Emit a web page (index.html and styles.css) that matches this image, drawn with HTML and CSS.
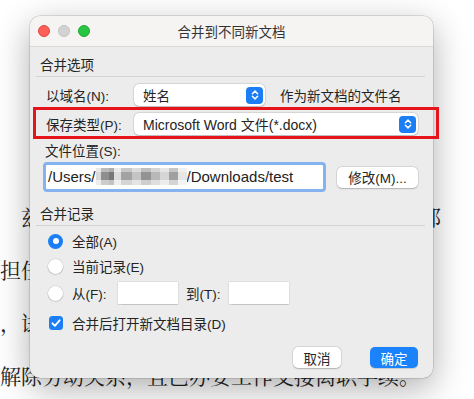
FILE: index.html
```html
<!DOCTYPE html>
<html lang="zh-CN">
<head>
<meta charset="utf-8">
<title>合并到不同新文档</title>
<link rel="stylesheet" href="styles.css">
</head>
<body>
<div class="doc">
  <p class="line">　兹证明我公司员工自入职以来在本公司财务部</p>
  <p class="line">担任会计一职，工作认真负责，能够独</p>
  <p class="line">，试用期满后转为正式员工，表现良好成</p>
  <p class="line">解除劳动关系，且已办妥工作交接离职手续。</p>
</div>

<div class="dialog">
  <div class="titlebar">
    <div class="lights">
      <span class="light red"></span>
      <span class="light gray"></span>
      <span class="light green"></span>
    </div>
    <div class="title">合并到不同新文档</div>
  </div>
  <div class="content">
    <div class="section-head">合并选项</div>

    <div class="row row-first">
      <span class="label">以域名(N):</span>
      <div class="popup popup-short">
        <span class="popup-text">姓名</span>
        <span class="stepper"><svg viewBox="0 0 16 16" width="14" height="14"><path d="M5 6.5 8 3.6 11 6.5M5 9.5 8 12.4 11 9.5" fill="none" stroke="#fff" stroke-width="1.7" stroke-linecap="round" stroke-linejoin="round"/></svg></span>
      </div>
      <span class="hint">作为新文档的文件名</span>
    </div>

    <div class="row row-second">
      <span class="label">保存类型(P):</span>
      <div class="popup popup-long">
        <span class="popup-text popup-text-long">Microsoft Word 文件(*.docx)</span>
        <span class="stepper"><svg viewBox="0 0 16 16" width="14" height="14"><path d="M5 6.5 8 3.6 11 6.5M5 9.5 8 12.4 11 9.5" fill="none" stroke="#fff" stroke-width="1.7" stroke-linecap="round" stroke-linejoin="round"/></svg></span>
      </div>
    </div>

    <div class="label loc-label">文件位置(S):</div>
    <div class="row row-loc">
      <div class="path-input">/Users/<span class="mosaic"></span>/Downloads/test</div>
      <button class="btn btn-change">修改(M)...</button>
    </div>

    <div class="section-head section-records">合并记录</div>

    <div class="options">
      <div class="opt opt-all"><span class="radio on"></span><span>全部(A)</span></div>
      <div class="opt opt-current"><span class="radio"></span><span>当前记录(E)</span></div>
      <div class="opt opt-range">
        <span class="radio"></span><span class="range-label">从(F):</span>
        <span class="num-input num-from"></span>
        <span class="range-label to-label">到(T):</span>
        <span class="num-input num-to"></span>
      </div>
      <div class="opt opt-check">
        <span class="check"><svg viewBox="0 0 14 14" width="14" height="14"><path d="M3.4 7.3 5.9 9.8 10.6 4.3" fill="none" stroke="#fff" stroke-width="1.8" stroke-linecap="round" stroke-linejoin="round"/></svg></span>
        <span>合并后打开新文档目录(D)</span>
      </div>
    </div>

    <div class="footer">
      <button class="btn btn-cancel">取消</button>
      <button class="btn btn-ok">确定</button>
    </div>
  </div>
  <div class="highlight"></div>
</div>
</body>
</html>
```

FILE: styles.css
```css
html, body {
  margin: 0;
  padding: 0;
  background: #ffffff;
  width: 474px;
  height: 399px;
  overflow: hidden;
}

body {
  position: relative;
  font-family: "Liberation Sans", "Noto Sans CJK SC", sans-serif;
}

.doc {
  padding-top: 190px;
  font-family: "Noto Serif CJK SC", "Noto Sans CJK SC", serif;
  font-size: 21px;
  color: #222;
}

.line {
  margin: 0;
  height: 53px;
  line-height: 53px;
  white-space: nowrap;
}

.dialog {
  position: absolute;
  left: 30px;
  top: 16px;
  width: 403px;
  height: 362px;
  background: #ececec;
  border-radius: 10px;
  box-shadow: 0 0 0 0.5px rgba(0, 0, 0, 0.22), 0 10px 34px rgba(0, 0, 0, 0.32);
  color: #242424;
  font-size: 13.5px;
}

.titlebar {
  height: 30px;
  background: #f5f4f3;
  border-bottom: 1px solid #d9d9d9;
  border-radius: 10px 10px 0 0;
  display: flex;
  align-items: center;
  position: relative;
}

.lights {
  display: flex;
  gap: 8px;
  padding-left: 8px;
}

.light {
  width: 12px;
  height: 12px;
  border-radius: 50%;
  box-sizing: border-box;
}

.light.red { background: #fe5f57; border: 0.5px solid #e2463f; }
.light.gray { background: #d2d2d2; border: 0.5px solid #c4c4c4; }
.light.green { background: #29c441; border: 0.5px solid #1ea932; }

.title {
  position: absolute;
  left: 0;
  right: 0;
  text-align: center;
  font-size: 13.5px;
  color: #333;
}

.content {
  padding: 0 15px 0 0;
  display: flex;
  flex-direction: column;
}

.section-head {
  margin: 9px -7px 0 6px;
  padding-left: 4px;
  height: 20px;
  line-height: 20px;
  border-bottom: 1px solid #d3d3d3;
}

.section-records {
  margin-top: 13px;
}

.row {
  display: flex;
  align-items: center;
  padding-left: 16px;
}

.row-first { margin-top: 7px; height: 22px; }
.row-second { margin-top: 7px; height: 22px; }

.label {
  width: 88px;
  flex: none;
}

.popup {
  height: 22px;
  background: #fff;
  border-radius: 5px;
  box-shadow: 0 0 0 0.5px rgba(0, 0, 0, 0.12), 0 0.5px 1.5px rgba(0, 0, 0, 0.18);
  display: flex;
  align-items: center;
  justify-content: space-between;
  box-sizing: border-box;
  padding: 0 2px 0 9px;
}

.popup-short { width: 131px; }
.popup-long { width: 284px; }

.popup-text-long {
  font-size: 14px;
}

.stepper {
  width: 17px;
  height: 17px;
  border-radius: 4px;
  background: #1b7ef4;
  display: flex;
  align-items: center;
  justify-content: center;
}

.hint {
  margin-left: 15px;
}

.loc-label {
  margin: 7px 0 0 15px;
  height: 20px;
  line-height: 20px;
}

.row-loc {
  padding-left: 13px;
  height: 30px;
  justify-content: space-between;
}

.path-input {
  width: 283px;
  height: 30px;
  box-sizing: border-box;
  border: 3px solid #86b3f0;
  border-radius: 4px;
  background: #fff;
  padding-left: 2px;
  line-height: 24px;
  font-size: 15px;
  color: #222;
  white-space: nowrap;
}

.mosaic {
  display: inline-block;
  width: 91px;
  height: 17px;
  vertical-align: -3px;
  background:
    linear-gradient(180deg, rgba(255,255,255,0.4) 0 25%, rgba(255,255,255,0) 25% 70%, rgba(255,255,255,0.55) 70%),
    linear-gradient(90deg, #d9d9d9 0 6%, #8e8e8e 6% 14%, #777 14% 20%, #dcdcdc 20% 28%, #a2a2a2 28% 40%, #c4c4c4 40% 50%, #939393 50% 60%, #b8b8b8 60% 70%, #d6d6d6 70% 80%, #a0a0a0 80% 90%, #e6e6e6 90%);
  filter: blur(0.7px);
}

.btn {
  font-family: inherit;
  font-size: 13.5px;
  color: #262626;
  background: #fff;
  border: none;
  border-radius: 5px;
  height: 21px;
  padding: 0;
  box-shadow: 0 0 0 0.5px rgba(0, 0, 0, 0.12), 0 0.5px 1.5px rgba(0, 0, 0, 0.2);
}

.btn-change {
  width: 81px;
}

.options {
  display: flex;
  flex-direction: column;
  padding-left: 18px;
}

.opt {
  display: flex;
  align-items: center;
  gap: 9px;
}

.opt-all { margin-top: 5px; height: 20px; }
.opt-current { margin-top: 5px; height: 20px; }
.opt-range { margin-top: 6px; height: 22px; gap: 0; }
.opt-check { margin-top: 9px; height: 20px; }

.radio {
  width: 15px;
  height: 15px;
  border-radius: 50%;
  background: #fff;
  box-sizing: border-box;
  box-shadow: 0 0 0 0.5px rgba(0, 0, 0, 0.12), 0 0.5px 1.5px rgba(0, 0, 0, 0.18);
  flex: none;
  position: relative;
}

.radio.on {
  background: #1b7ef4;
  box-shadow: none;
}

.radio.on::after {
  content: "";
  position: absolute;
  left: 4.5px;
  top: 4.5px;
  width: 6px;
  height: 6px;
  border-radius: 50%;
  background: #fff;
}

.opt-range .radio {
  margin-right: 9px;
}

.range-label {
  flex: none;
  width: 46px;
}

.to-label {
  width: 43px;
  margin-left: 8px;
}

.num-input {
  width: 60px;
  height: 22px;
  background: #fff;
  box-shadow: 0 0 0 0.5px rgba(0, 0, 0, 0.1), 0 0.5px 1px rgba(0, 0, 0, 0.12);
}

.check {
  width: 14px;
  height: 14px;
  border-radius: 3.5px;
  background: #1b7ef4;
  display: flex;
  flex: none;
  margin-left: 0.5px;
  margin-right: 0.5px;
}

.footer {
  margin-top: 14px;
  display: flex;
  justify-content: flex-end;
  gap: 29px;
}

.btn-cancel, .btn-ok {
  width: 48px;
}

.btn-ok {
  background: #1a82fb;
  color: #fff;
  box-shadow: 0 0.5px 1px rgba(0, 0, 0, 0.15);
}

.highlight {
  position: absolute;
  left: 3px;
  top: 91px;
  width: 406px;
  height: 32px;
  box-sizing: border-box;
  border: 3px solid #e5141b;
  pointer-events: none;
}
```
